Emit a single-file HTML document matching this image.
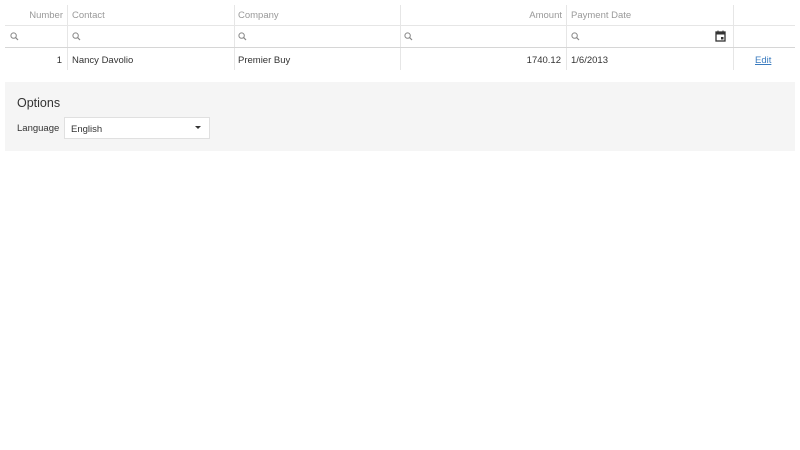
<!DOCTYPE html>
<html><head><style>
body{margin:0;background:#fff;font-family:"Liberation Sans",sans-serif;font-size:9.5px;color:#333;}
.t{position:absolute;left:5px;top:5px;width:790px;}
.cell{position:absolute;white-space:nowrap;}
svg{position:absolute;}
</style></head><body>
<div class="t">
 <div style="position:absolute;left:62px;top:0;width:1px;height:65px;background:#e6e6e6"></div>
 <div style="position:absolute;left:229px;top:0;width:1px;height:65px;background:#e6e6e6"></div>
 <div style="position:absolute;left:395px;top:0;width:1px;height:65px;background:#e6e6e6"></div>
 <div style="position:absolute;left:561px;top:0;width:1px;height:65px;background:#e6e6e6"></div>
 <div style="position:absolute;left:728px;top:0;width:1px;height:65px;background:#e6e6e6"></div>
 <div style="position:absolute;left:0;top:20px;width:790px;height:1px;background:#e6e6e6"></div>
 <div style="position:absolute;left:0;top:42px;width:790px;height:1px;background:#d6d6d6"></div>
 <div class="cell h" style="right:732px;top:5px;color:#999">Number</div>
 <div class="cell" style="left:67px;top:5px;color:#999">Contact</div>
 <div class="cell" style="left:233px;top:5px;color:#999">Company</div>
 <div class="cell" style="right:233px;top:5px;color:#999">Amount</div>
 <div class="cell" style="left:566px;top:5px;color:#999">Payment Date</div>
 <svg style="left:5px;top:27px" width="9" height="9" viewBox="0 0 9 9"><circle cx="3.6" cy="3.6" r="2.7" fill="none" stroke="#888" stroke-width="1"/><path d="M5.6 5.6L8 8" stroke="#888" stroke-width="1.2"/></svg>
 <svg style="left:67px;top:27px" width="9" height="9" viewBox="0 0 9 9"><circle cx="3.6" cy="3.6" r="2.7" fill="none" stroke="#888" stroke-width="1"/><path d="M5.6 5.6L8 8" stroke="#888" stroke-width="1.2"/></svg>
 <svg style="left:233px;top:27px" width="9" height="9" viewBox="0 0 9 9"><circle cx="3.6" cy="3.6" r="2.7" fill="none" stroke="#888" stroke-width="1"/><path d="M5.6 5.6L8 8" stroke="#888" stroke-width="1.2"/></svg>
 <svg style="left:399px;top:27px" width="9" height="9" viewBox="0 0 9 9"><circle cx="3.6" cy="3.6" r="2.7" fill="none" stroke="#888" stroke-width="1"/><path d="M5.6 5.6L8 8" stroke="#888" stroke-width="1.2"/></svg>
 <svg style="left:566px;top:27px" width="9" height="9" viewBox="0 0 9 9"><circle cx="3.6" cy="3.6" r="2.7" fill="none" stroke="#888" stroke-width="1"/><path d="M5.6 5.6L8 8" stroke="#888" stroke-width="1.2"/></svg>
 <svg style="left:710px;top:25px" width="11" height="12" viewBox="0 0 11 12"><rect x="1" y="2" width="9" height="9" fill="none" stroke="#333" stroke-width="1.3"/><rect x="1" y="2" width="9" height="2.5" fill="#333"/><path d="M3 0.5v2M8 0.5v2" stroke="#333"/><rect x="6" y="7" width="2.5" height="2.5" fill="#333"/></svg>
 <div class="cell" style="right:733px;top:50px">1</div>
 <div class="cell" style="left:67px;top:50px">Nancy Davolio</div>
 <div class="cell" style="left:233px;top:50px">Premier Buy</div>
 <div class="cell" style="right:234px;top:50px">1740.12</div>
 <div class="cell" style="left:566px;top:50px">1/6/2013</div>
 <div class="cell" style="left:750px;top:50px;color:#3a7bbf;text-decoration:underline">Edit</div>
</div>
<div style="position:absolute;left:5px;top:82px;width:790px;height:69px;background:#f5f5f5">
 <div style="position:absolute;left:12px;top:14px;font-size:12.5px;color:#333">Options</div>
 <div style="position:absolute;left:12px;top:41px">Language</div>
 <div style="position:absolute;left:59px;top:35px;width:144px;height:20px;background:#fff;border:1px solid #e0e0e0">
  <div style="position:absolute;left:6px;top:6px">English</div>
  <div style="position:absolute;right:8px;top:8px;width:0;height:0;border-left:3px solid transparent;border-right:3px solid transparent;border-top:3px solid #333"></div>
 </div>
</div>
</body></html>
